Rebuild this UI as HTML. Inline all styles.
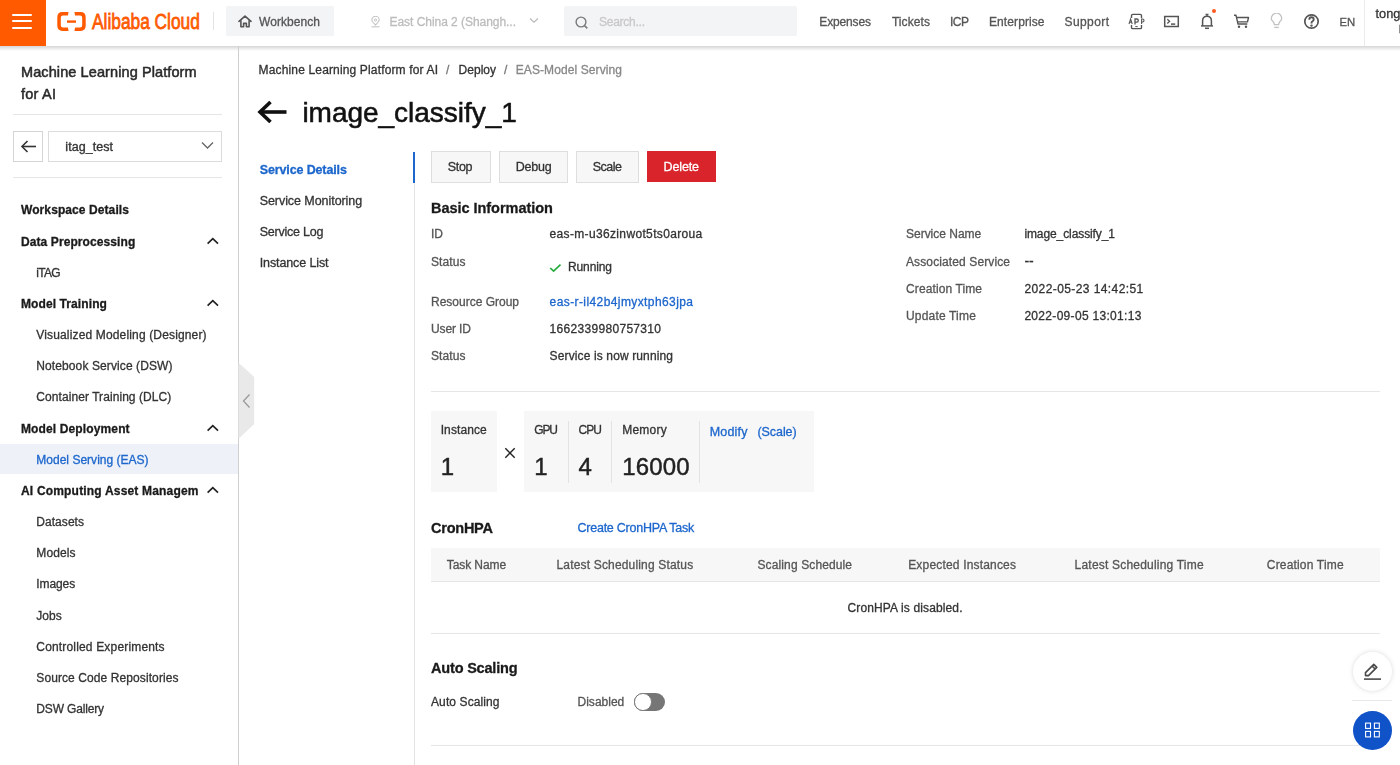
<!DOCTYPE html>
<html><head><meta charset="utf-8"><style>
html,body{margin:0;padding:0;width:1400px;height:765px;overflow:hidden;background:#fff;position:relative;font-family:"Liberation Sans",sans-serif}
.t{position:absolute;line-height:20px;white-space:nowrap;-webkit-text-stroke:0.3px currentColor;transform:translateZ(0)}
#hdr{position:absolute;left:0;top:0;width:1400px;height:46px;background:#fff}
</style></head><body>
<div id="hdr"></div><div style="position:absolute;left:0;top:0;width:46px;height:46px;background:#ff5a00"></div><div style="position:absolute;left:12px;top:13.6px;width:19.5px;height:2px;background:#fff;border-radius:1px"></div><div style="position:absolute;left:12px;top:20.3px;width:19.5px;height:2px;background:#fff;border-radius:1px"></div><div style="position:absolute;left:12px;top:27px;width:19.5px;height:2px;background:#fff;border-radius:1px"></div><svg style="position:absolute;left:56px;top:11px" width="32" height="21" viewBox="0 0 32 21">
<path d="M1.3 6.5 Q1.3 1.1 6.5 1.1 H12.6 L11.9 4.6 H7 Q4.8 4.6 4.8 6.8 V14.2 Q4.8 16.4 7 16.4 H11.9 L12.6 19.9 H6.5 Q1.3 19.9 1.3 14.5 Z" fill="#ff5a00"/>
<path d="M29.7 6.5 Q29.7 1.1 24.5 1.1 H18.4 L19.1 4.6 H24 Q26.2 4.6 26.2 6.8 V14.2 Q26.2 16.4 24 16.4 H19.1 L18.4 19.9 H24.5 Q29.7 19.9 29.7 14.5 Z" fill="#ff5a00"/>
<rect x="11" y="9.4" width="9" height="2.4" fill="#ff5a00"/>
</svg><div class="t" style="left:92.30px;top:12.10px;font-size:22.5px;color:#ff5a00;-webkit-text-stroke:0.8px #ff5a00;transform:scaleX(0.77);transform-origin:0 0">Alibaba Cloud</div><div style="position:absolute;left:213px;top:12px;width:1px;height:18px;background:#e3e3e3"></div><div style="position:absolute;left:226px;top:6px;width:108px;height:30px;background:#f3f4f6;border-radius:2px"></div><svg style="position:absolute;left:238px;top:15px" width="14" height="13" viewBox="0 0 14 13"><path d="M1 6.3 L7 1.2 L13 6.3" fill="none" stroke="#555" stroke-width="1.7" stroke-linejoin="round" stroke-linecap="round"/><path d="M2.9 5.2 V11.8 H5.6 V8.4 H8.4 V11.8 H11.1 V5.2" fill="none" stroke="#555" stroke-width="1.6" stroke-linejoin="round"/></svg><div class="t" style="left:259.00px;top:11.94px;font-size:12px;color:#555;letter-spacing:0.065px;">Workbench</div>
<svg style="position:absolute;left:370px;top:16px" width="11" height="12" viewBox="0 0 11 12"><path d="M5.5 9 C3 6.5 1.8 5.3 1.8 4 A3.7 3.7 0 0 1 9.2 4 C9.2 5.3 8 6.5 5.5 9 Z" fill="none" stroke="#c4c4c4" stroke-width="1.1"/><circle cx="5.5" cy="4" r="1.1" fill="none" stroke="#c4c4c4" stroke-width="1"/><path d="M1.5 10.8 H9.5" stroke="#c4c4c4" stroke-width="1.1"/></svg><div class="t" style="left:389.50px;top:11.94px;font-size:12px;color:#bcbcbc;letter-spacing:-0.042px;">East China 2 (Shangh...</div>
<svg style="position:absolute;left:529px;top:17px" width="10" height="7" viewBox="0 0 10 7"><path d="M1 1.5 L5 5.2 L9 1.5" fill="none" stroke="#bbb" stroke-width="1.3"/></svg><div style="position:absolute;left:564px;top:6px;width:233px;height:30px;background:#f3f4f6;border-radius:2px"></div><svg style="position:absolute;left:575px;top:15.5px" width="14" height="15" viewBox="0 0 14 15"><circle cx="6" cy="6" r="4.9" fill="none" stroke="#7a7a7a" stroke-width="1.4"/><path d="M9.5 9.6 L12.3 12.4" stroke="#7a7a7a" stroke-width="1.5"/></svg><div class="t" style="left:599.00px;top:11.94px;font-size:12px;color:#c8c8c8;letter-spacing:-0.253px;">Search...</div>
<div class="t" style="left:819.30px;top:11.94px;font-size:12px;color:#555;letter-spacing:-0.143px;">Expenses</div>
<div class="t" style="left:891.90px;top:11.94px;font-size:12px;color:#555;letter-spacing:0.090px;">Tickets</div>
<div class="t" style="left:950.00px;top:11.94px;font-size:12px;color:#555;letter-spacing:-0.502px;">ICP</div>
<div class="t" style="left:989.00px;top:11.94px;font-size:12px;color:#555;letter-spacing:0.089px;">Enterprise</div>
<div class="t" style="left:1064.50px;top:11.94px;font-size:12px;color:#555;letter-spacing:0.413px;">Support</div>
<svg style="position:absolute;left:1128px;top:13px" width="17" height="17" viewBox="0 0 17 17">
<path d="M3.5 5 V2.6 Q3.5 1.4 4.8 1.4 H12.2 Q13.5 1.4 13.5 2.6 V5 M3.5 12 V14.4 Q3.5 15.6 4.8 15.6 H12.2 Q13.5 15.6 13.5 14.4 V12" fill="none" stroke="#555" stroke-width="1.4"/>
<path d="M1 11 L2.6 6 L4.2 11 M1.6 9.3 H3.6" fill="none" stroke="#555" stroke-width="1.1"/>
<path d="M7 11.5 V6 H8.8 Q10.3 6 10.3 7.6 Q10.3 9.2 8.8 9.2 H7" fill="none" stroke="#555" stroke-width="1.3"/>
<path d="M13.6 11 V6 H14.6 Q16 6 16 7.5 Q16 9 14.6 9 H13.6" fill="none" stroke="#555" stroke-width="1.1"/>
<path d="M7.3 13.6 H9.7" stroke="#555" stroke-width="1"/>
</svg><svg style="position:absolute;left:1163px;top:15px" width="17" height="13" viewBox="0 0 17 13"><rect x="1.7" y="1.5" width="13.6" height="10" fill="none" stroke="#555" stroke-width="1.5"/><path d="M4.3 4.2 L6.6 6.3 L4.3 8.4" fill="none" stroke="#555" stroke-width="1.3"/><path d="M8 9.1 H12.2" stroke="#555" stroke-width="1.5"/></svg><svg style="position:absolute;left:1200px;top:13px" width="14" height="17" viewBox="0 0 14 17"><path d="M7 1.2 V3" stroke="#555" stroke-width="1.4"/><path d="M5.5 1.3 H8.5" stroke="#555" stroke-width="1.2"/><path d="M2.6 12.8 V8 Q2.6 3.2 7 3.2 Q11.4 3.2 11.4 8 V12.8" fill="none" stroke="#555" stroke-width="1.5"/><path d="M1 12.9 H13" stroke="#555" stroke-width="1.5"/><path d="M5 15.3 H9" stroke="#555" stroke-width="1.5"/></svg><div style="position:absolute;left:1212px;top:8.8px;width:4.2px;height:4.2px;border-radius:50%;background:#ff5a1f"></div><svg style="position:absolute;left:1233px;top:14px" width="17" height="15" viewBox="0 0 17 15"><path d="M1 1.3 H3 L5 10 H14.3" fill="none" stroke="#555" stroke-width="1.4" stroke-linejoin="round"/><path d="M3.6 3.5 H15.5 L14.5 7.9 H4.5" fill="none" stroke="#555" stroke-width="1.4" stroke-linejoin="round"/><circle cx="6" cy="12.8" r="1.2" fill="#555"/><circle cx="13" cy="12.8" r="1.2" fill="#555"/></svg><svg style="position:absolute;left:1270px;top:13px" width="13" height="17" viewBox="0 0 13 17"><path d="M4.3 11.6 Q4.3 9.7 3 8.5 Q1.3 6.9 1.3 5.4 A5.2 5.2 0 0 1 11.7 5.4 Q11.7 6.9 10 8.5 Q8.7 9.7 8.7 11.6 Z" fill="none" stroke="#c2c2c2" stroke-width="1.3" stroke-linejoin="round"/><path d="M4.3 14.4 H8.7" stroke="#c2c2c2" stroke-width="1.4"/></svg><svg style="position:absolute;left:1303px;top:13px" width="17" height="17" viewBox="0 0 17 17"><circle cx="8.5" cy="8.5" r="6.7" fill="none" stroke="#555" stroke-width="1.7"/><path d="M6.3 6.7 Q6.3 4.3 8.5 4.3 Q10.7 4.3 10.7 6.4 Q10.7 7.6 9.5 8.3 Q8.5 8.9 8.5 10 V10.4" fill="none" stroke="#555" stroke-width="1.9"/><circle cx="8.5" cy="12.6" r="1.2" fill="#555"/></svg><div class="t" style="left:1339.50px;top:12.18px;font-size:11.3px;color:#555;">EN</div>
<div style="position:absolute;left:1364px;top:0;width:1px;height:46px;background:#ececec"></div><div class="t" style="left:1375.50px;top:3.66px;font-size:12.8px;color:#333;">tong</div>
<div class="t" style="left:1398.20px;top:19.49px;font-size:11px;color:#888;">M</div>
<div style="position:absolute;left:0;top:46px;width:1400px;height:5px;background:linear-gradient(#d6d6d6,rgba(255,255,255,0))"></div><div style="position:absolute;left:238px;top:46px;width:1px;height:719px;background:#cfcfcf"></div><div class="t" style="left:21.00px;top:62.28px;font-size:14.5px;color:#2a2a2a;letter-spacing:0.096px;-webkit-text-stroke:0.5px #2a2a2a;">Machine Learning Platform</div>
<div class="t" style="left:21.00px;top:83.58px;font-size:14.5px;color:#2a2a2a;letter-spacing:0.211px;-webkit-text-stroke:0.5px #2a2a2a;">for AI</div>
<div style="position:absolute;left:13px;top:114px;width:209px;height:1px;background:#e5e5e5"></div><div style="position:absolute;left:13px;top:130.5px;width:28px;height:29px;border:1px solid #d5d5d5;background:#fff"></div><svg style="position:absolute;left:19.7px;top:138.8px" width="18" height="15" viewBox="0 0 18 15"><path d="M2 7.5 H16" stroke="#333" stroke-width="1.6"/><path d="M7.5 2 L2 7.5 L7.5 13" fill="none" stroke="#333" stroke-width="1.6"/></svg><div style="position:absolute;left:47.8px;top:130.5px;width:172.2px;height:29px;border:1px solid #dcdcdc;background:#fff"></div><div class="t" style="left:65.30px;top:136.57px;font-size:12.5px;color:#333;letter-spacing:0.056px;-webkit-text-stroke:0.35px #333;">itag_test</div>
<svg style="position:absolute;left:201px;top:141px" width="13" height="9" viewBox="0 0 13 9"><path d="M1 1.5 L6.5 7 L12 1.5" fill="none" stroke="#666" stroke-width="1.3"/></svg><div style="position:absolute;left:13px;top:177px;width:209px;height:1px;background:#e5e5e5"></div><div style="position:absolute;left:0;top:443.5px;width:238px;height:30.7px;background:#eef1f8"></div><div class="t" style="left:21.00px;top:200.34px;font-size:12px;color:#1a1a1a;font-weight:bold;letter-spacing:0.088px;">Workspace Details</div>
<div class="t" style="left:21.00px;top:231.51px;font-size:12px;color:#1a1a1a;font-weight:bold;letter-spacing:0.093px;">Data Preprocessing</div>
<svg style="position:absolute;left:205.5px;top:235.9px" width="14" height="10" viewBox="0 0 14 10"><path d="M1.6 7.6 L6.8 2.6 L12 7.6" fill="none" stroke="#222" stroke-width="1.7"/></svg><div class="t" style="left:36.30px;top:262.68px;font-size:12px;color:#333;letter-spacing:-0.683px;">iTAG</div>
<div class="t" style="left:21.00px;top:293.85px;font-size:12px;color:#1a1a1a;font-weight:bold;letter-spacing:0.094px;">Model Training</div>
<svg style="position:absolute;left:205.5px;top:298.2px" width="14" height="10" viewBox="0 0 14 10"><path d="M1.6 7.6 L6.8 2.6 L12 7.6" fill="none" stroke="#222" stroke-width="1.7"/></svg><div class="t" style="left:36.30px;top:325.02px;font-size:12px;color:#333;letter-spacing:0.153px;">Visualized Modeling (Designer)</div>
<div class="t" style="left:36.30px;top:356.19px;font-size:12px;color:#333;letter-spacing:0.103px;">Notebook Service (DSW)</div>
<div class="t" style="left:36.30px;top:387.36px;font-size:12px;color:#333;letter-spacing:0.070px;">Container Training (DLC)</div>
<div class="t" style="left:21.00px;top:418.53px;font-size:12px;color:#1a1a1a;font-weight:bold;letter-spacing:0.128px;">Model Deployment</div>
<svg style="position:absolute;left:205.5px;top:422.9px" width="14" height="10" viewBox="0 0 14 10"><path d="M1.6 7.6 L6.8 2.6 L12 7.6" fill="none" stroke="#222" stroke-width="1.7"/></svg><div class="t" style="left:36.30px;top:449.70px;font-size:12px;color:#1c66cc;letter-spacing:0.014px;">Model Serving (EAS)</div>
<div class="t" style="left:21.00px;top:480.87px;font-size:12px;color:#1a1a1a;font-weight:bold;letter-spacing:0.184px;">AI Computing Asset Managem</div>
<svg style="position:absolute;left:205.5px;top:485.2px" width="14" height="10" viewBox="0 0 14 10"><path d="M1.6 7.6 L6.8 2.6 L12 7.6" fill="none" stroke="#222" stroke-width="1.7"/></svg><div class="t" style="left:36.30px;top:512.04px;font-size:12px;color:#333;letter-spacing:0.050px;">Datasets</div>
<div class="t" style="left:36.30px;top:543.21px;font-size:12px;color:#333;letter-spacing:0.122px;">Models</div>
<div class="t" style="left:36.30px;top:574.38px;font-size:12px;color:#333;letter-spacing:-0.090px;">Images</div>
<div class="t" style="left:36.30px;top:605.55px;font-size:12px;color:#333;letter-spacing:0.019px;">Jobs</div>
<div class="t" style="left:36.30px;top:636.72px;font-size:12px;color:#333;letter-spacing:0.170px;">Controlled Experiments</div>
<div class="t" style="left:36.30px;top:667.89px;font-size:12px;color:#333;letter-spacing:0.092px;">Source Code Repositories</div>
<div class="t" style="left:36.30px;top:699.06px;font-size:12px;color:#333;letter-spacing:-0.154px;">DSW Gallery</div>
<svg style="position:absolute;left:238px;top:362px" width="18" height="78" viewBox="0 0 18 78"><path d="M0.5 0.7 L16.2 14.9 V62 L0.5 76.8 Z" fill="#e9e9e9"/><path d="M11.5 32.5 L5.5 39 L11.5 45.5" fill="none" stroke="#9a9a9a" stroke-width="1.3"/></svg><div class="t" style="left:258.60px;top:60.04px;font-size:12px;color:#333;letter-spacing:0.150px;">Machine Learning Platform for AI</div>
<div class="t" style="left:446.00px;top:60.04px;font-size:12px;color:#777;">/</div>
<div class="t" style="left:458.60px;top:60.04px;font-size:12px;color:#333;letter-spacing:0.009px;">Deploy</div>
<div class="t" style="left:504.00px;top:60.04px;font-size:12px;color:#777;">/</div>
<div class="t" style="left:515.70px;top:60.04px;font-size:12px;color:#888;letter-spacing:0.099px;">EAS-Model Serving</div>
<svg style="position:absolute;left:257px;top:100px" width="31" height="25" viewBox="0 0 31 25"><path d="M3 12 H29.5" stroke="#111" stroke-width="3.6"/><path d="M13.5 2 L3 12 L13.5 22" fill="none" stroke="#111" stroke-width="3.6"/></svg><div class="t" style="left:302.40px;top:102.90px;font-size:28px;color:#111;letter-spacing:-0.024px;-webkit-text-stroke:0.55px #111;">image_classify_1</div>
<div class="t" style="left:259.70px;top:159.57px;font-size:12.5px;color:#1c66cc;font-weight:bold;letter-spacing:-0.125px;">Service Details</div>
<div class="t" style="left:259.70px;top:191.27px;font-size:12.5px;color:#333;letter-spacing:-0.060px;">Service Monitoring</div>
<div class="t" style="left:259.70px;top:222.47px;font-size:12.5px;color:#333;letter-spacing:-0.231px;">Service Log</div>
<div class="t" style="left:259.70px;top:252.97px;font-size:12.5px;color:#333;letter-spacing:-0.115px;">Instance List</div>
<div style="position:absolute;left:414px;top:152px;width:1px;height:613px;background:#e3e3e3"></div><div style="position:absolute;left:413px;top:152px;width:2.2px;height:31px;background:#1c66cc"></div><div style="position:absolute;left:430.6px;top:151px;width:58.3px;height:29.5px;border:1px solid #dedede;background:#f7f7f7"></div><div class="t" style="left:447.70px;top:156.97px;font-size:12.5px;color:#333;letter-spacing:-0.304px;">Stop</div>
<div style="position:absolute;left:499px;top:151px;width:67.4px;height:29.5px;border:1px solid #dedede;background:#f7f7f7"></div><div class="t" style="left:515.70px;top:156.97px;font-size:12.5px;color:#333;letter-spacing:-0.184px;">Debug</div>
<div style="position:absolute;left:576.1px;top:151px;width:60.7px;height:29.5px;border:1px solid #dedede;background:#f7f7f7"></div><div class="t" style="left:592.70px;top:156.97px;font-size:12.5px;color:#333;letter-spacing:-0.491px;">Scale</div>
<div style="position:absolute;left:647px;top:151px;width:68.6px;height:31px;background:#d9242b"></div><div class="t" style="left:663.60px;top:156.97px;font-size:12.5px;color:#fff;letter-spacing:-0.148px;">Delete</div>
<div class="t" style="left:431.00px;top:198.38px;font-size:14.5px;color:#1a1a1a;font-weight:bold;letter-spacing:-0.035px;">Basic Information</div>
<div class="t" style="left:431.00px;top:224.24px;font-size:12px;color:#555;">ID</div>
<div class="t" style="left:431.00px;top:252.14px;font-size:12px;color:#555;letter-spacing:0.116px;">Status</div>
<div class="t" style="left:431.00px;top:291.74px;font-size:12px;color:#555;">Resource Group</div>
<div class="t" style="left:431.00px;top:318.74px;font-size:12px;color:#555;letter-spacing:-0.111px;">User ID</div>
<div class="t" style="left:431.00px;top:346.14px;font-size:12px;color:#555;letter-spacing:0.116px;">Status</div>
<div class="t" style="left:549.50px;top:224.24px;font-size:12px;color:#333;letter-spacing:0.350px;">eas-m-u36zinwot5ts0aroua</div>
<svg style="position:absolute;left:548px;top:262px" width="15" height="11" viewBox="0 0 15 11"><path d="M2.2 6 L5.6 9.2 L12.5 2.6" fill="none" stroke="#26ad3c" stroke-width="1.7"/></svg><div class="t" style="left:568.00px;top:257.44px;font-size:12px;color:#333;letter-spacing:-0.117px;">Running</div>
<div class="t" style="left:549.60px;top:291.74px;font-size:12px;color:#1c66cc;letter-spacing:0.405px;">eas-r-il42b4jmyxtph63jpa</div>
<div class="t" style="left:549.60px;top:318.74px;font-size:12px;color:#333;letter-spacing:0.307px;">1662339980757310</div>
<div class="t" style="left:549.60px;top:346.14px;font-size:12px;color:#333;letter-spacing:0.127px;">Service is now running</div>
<div class="t" style="left:906.00px;top:224.34px;font-size:12px;color:#555;letter-spacing:-0.015px;">Service Name</div>
<div class="t" style="left:1024.40px;top:224.34px;font-size:12px;color:#333;letter-spacing:-0.096px;">image_classify_1</div>
<div class="t" style="left:906.00px;top:251.64px;font-size:12px;color:#555;letter-spacing:0.115px;">Associated Service</div>
<div class="t" style="left:1024.40px;top:250.95px;font-size:14px;color:#333;">--</div>
<div class="t" style="left:906.00px;top:278.94px;font-size:12px;color:#555;letter-spacing:0.108px;">Creation Time</div>
<div class="t" style="left:1024.40px;top:278.94px;font-size:12px;color:#333;letter-spacing:0.415px;">2022-05-23 14:42:51</div>
<div class="t" style="left:906.00px;top:306.04px;font-size:12px;color:#555;letter-spacing:0.177px;">Update Time</div>
<div class="t" style="left:1024.40px;top:306.04px;font-size:12px;color:#333;letter-spacing:0.309px;">2022-09-05 13:01:13</div>
<div style="position:absolute;left:431px;top:390.5px;width:949px;height:1px;background:#e5e5e5"></div><div style="position:absolute;left:431px;top:411px;width:65.5px;height:81px;background:#f7f7f7"></div><div style="position:absolute;left:524px;top:411px;width:290px;height:81px;background:#f7f7f7"></div><div class="t" style="left:440.70px;top:420.44px;font-size:12px;color:#333;letter-spacing:0.091px;">Instance</div>
<div class="t" style="left:440.70px;top:457.08px;font-size:24px;color:#222;-webkit-text-stroke:0.45px #222;">1</div>
<svg style="position:absolute;left:503px;top:446px" width="14" height="14" viewBox="0 0 14 14"><path d="M2.3 2.3 L11.7 11.7 M11.7 2.3 L2.3 11.7" stroke="#222" stroke-width="1.4"/></svg><div class="t" style="left:534.30px;top:420.44px;font-size:12px;color:#333;letter-spacing:-1.152px;">GPU</div>
<div class="t" style="left:534.30px;top:457.08px;font-size:24px;color:#222;-webkit-text-stroke:0.45px #222;">1</div>
<div style="position:absolute;left:567.5px;top:421px;width:1px;height:62px;background:#e3e3e3"></div><div class="t" style="left:578.60px;top:420.44px;font-size:12px;color:#333;letter-spacing:-0.966px;">CPU</div>
<div class="t" style="left:578.60px;top:457.08px;font-size:24px;color:#222;-webkit-text-stroke:0.45px #222;">4</div>
<div style="position:absolute;left:611px;top:421px;width:1px;height:62px;background:#e3e3e3"></div><div class="t" style="left:622.20px;top:420.44px;font-size:12px;color:#333;letter-spacing:0.254px;">Memory</div>
<div class="t" style="left:622.20px;top:457.08px;font-size:24px;color:#222;letter-spacing:0.164px;-webkit-text-stroke:0.45px #222;">16000</div>
<div style="position:absolute;left:699px;top:421px;width:1px;height:62px;background:#e3e3e3"></div><div class="t" style="left:709.80px;top:421.97px;font-size:12.5px;color:#1c66cc;letter-spacing:0.158px;">Modify</div>
<div class="t" style="left:757.40px;top:421.97px;font-size:12.5px;color:#1c66cc;letter-spacing:-0.050px;">(Scale)</div>
<div class="t" style="left:431.10px;top:517.78px;font-size:14.5px;color:#1a1a1a;font-weight:bold;letter-spacing:-0.261px;">CronHPA</div>
<div class="t" style="left:577.50px;top:518.07px;font-size:12.5px;color:#1c66cc;letter-spacing:-0.242px;">Create CronHPA Task</div>
<div style="position:absolute;left:430.5px;top:548px;width:949.5px;height:33px;background:#f7f7f7;border-bottom:1px solid #e6e6e6"></div><div class="t" style="left:446.80px;top:555.04px;font-size:12px;color:#555;letter-spacing:-0.089px;">Task Name</div>
<div class="t" style="left:556.50px;top:555.04px;font-size:12px;color:#555;letter-spacing:0.171px;">Latest Scheduling Status</div>
<div class="t" style="left:757.50px;top:555.04px;font-size:12px;color:#555;letter-spacing:0.118px;">Scaling Schedule</div>
<div class="t" style="left:908.20px;top:555.04px;font-size:12px;color:#555;letter-spacing:0.180px;">Expected Instances</div>
<div class="t" style="left:1074.60px;top:555.04px;font-size:12px;color:#555;letter-spacing:0.203px;">Latest Scheduling Time</div>
<div class="t" style="left:1266.80px;top:555.04px;font-size:12px;color:#555;letter-spacing:0.175px;">Creation Time</div>
<div class="t" style="left:847.50px;top:598.14px;font-size:12px;color:#333;letter-spacing:0.132px;">CronHPA is disabled.</div>
<div style="position:absolute;left:430.5px;top:632.5px;width:949.5px;height:1px;background:#e6e6e6"></div><div class="t" style="left:431.10px;top:658.48px;font-size:14.5px;color:#1a1a1a;font-weight:bold;letter-spacing:-0.201px;">Auto Scaling</div>
<div class="t" style="left:431.00px;top:692.24px;font-size:12px;color:#333;letter-spacing:0.102px;">Auto Scaling</div>
<div class="t" style="left:577.50px;top:692.24px;font-size:12px;color:#555;letter-spacing:0.015px;">Disabled</div>
<div style="position:absolute;left:634px;top:693px;width:30.8px;height:17.5px;border-radius:9px;background:#767676"></div><div style="position:absolute;left:634px;top:693px;width:15.5px;height:15.5px;border-radius:50%;background:#fff;border:1px solid #767676"></div><div style="position:absolute;left:431px;top:745px;width:949px;height:1px;background:#e6e6e6"></div><div style="position:absolute;left:1352.5px;top:652px;width:39px;height:39px;border-radius:50%;background:#fff;box-shadow:0 0 5px rgba(0,0,0,0.15)"></div><svg style="position:absolute;left:1362px;top:661px" width="21" height="21" viewBox="0 0 21 21"><path d="M3.5 14.6 V11.6 L11.8 3.4 L14.8 6.4 L6.5 14.6 Z M10.2 5.1 L13.1 8" fill="none" stroke="#4a4a4a" stroke-width="1.6" stroke-linejoin="round"/><path d="M2 18.1 H19" stroke="#4a4a4a" stroke-width="1.6"/></svg><div style="position:absolute;left:1352px;top:700px;width:40px;height:1px;background:#e8e8e8"></div><div style="position:absolute;left:1353px;top:710.5px;width:39px;height:39px;border-radius:50%;background:#1052c8"></div><svg style="position:absolute;left:1363px;top:721px" width="19" height="18" viewBox="0 0 19 18"><g fill="none" stroke="#fff" stroke-width="1.1"><rect x="2.6" y="2.1" width="4.9" height="5.3"/><rect x="11.4" y="2.1" width="4.9" height="5.3"/><rect x="2.6" y="10.4" width="4.9" height="5.5"/><rect x="11.4" y="10.4" width="4.9" height="5.5"/></g></svg></body></html>
